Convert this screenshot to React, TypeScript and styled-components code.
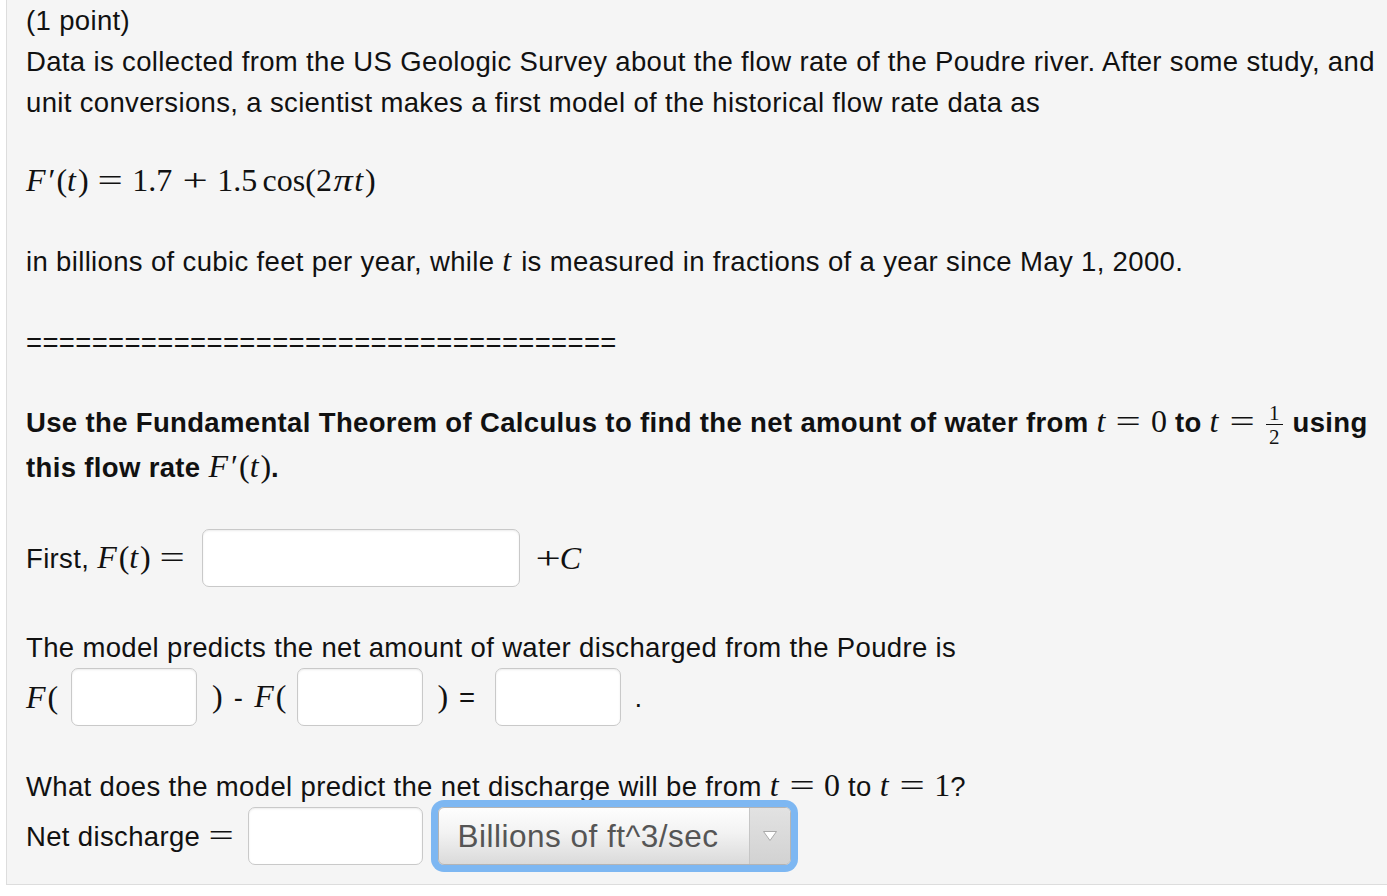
import * as React from "react";
import styled, { createGlobalStyle } from "styled-components";

const GlobalStyle = createGlobalStyle`
  html, body {
    margin: 0;
    padding: 0;
    background: #ffffff;
  }
  body {
    font-family: "Liberation Sans", Arial, sans-serif;
  }
`;

const App: React.FC = () => {
  return (
    <>
      <GlobalStyle />
      <Panel>
        <Para $top={0}>
          (1 point)
          <br />
          Data is collected from the US Geologic Survey about the flow rate of
          the Poudre river. After some study, and
          <br />
          unit conversions, a scientist makes a first model of the historical
          flow rate data as
        </Para>

        <Para $top={38}>
          <M>
            <V>F</V>
            <Prime>′</Prime>(<V>t</V>)<Eq>=</Eq>1.7<Op>+</Op>1.5
            <Fn>cos</Fn>(2<Pi>π</Pi>
            <V>t</V>)
          </M>
        </Para>

        <Para $top={39}>
          in billions of cubic feet per year, while <M><V>t</V></M> is measured
          in fractions of a year since May 1, 2000.
        </Para>

        <Para $top={40}>====================================</Para>

        <BoldPara $top={38}>
          Use the Fundamental Theorem of Calculus to find the net amount of
          water from{" "}
          <M>
            <V>t</V>
            <Eq>=</Eq>0
          </M>{" "}
          to{" "}
          <M>
            <V>t</V>
            <Eq>=</Eq>
            <Frac>
              <span>1</span>
              <span>2</span>
            </Frac>
          </M>{" "}
          using
          <br />
          this flow rate{" "}
          <M>
            <V>F</V>
            <Prime>′</Prime>(<V>t</V>)
          </M>
          .
        </BoldPara>

        <Row $top={39}>
          <Label>
            First, <M><V>F</V>(<V>t</V>)<Eq>=</Eq></M>
          </Label>
          <Blank $w={318} $ml={8} />
          <M $ml={15}>
            <Op $tight>+</Op>
            <V>C</V>
          </M>
        </Row>

        <Para $top={40}>
          The model predicts the net amount of water discharged from the Poudre
          is
        </Para>
        <Row $top={0}>
          <M>
            <V>F</V>(
          </M>
          <Blank $w={126} $ml={13} />
          <Sym $ml={15}>
            <M>)</M>
            <Dash>-</Dash>
            <M>
              <V>F</V>(
            </M>
          </Sym>
          <Blank $w={126} $ml={11} />
          <Sym $ml={14}>
            <M>)</M>
            <Dash>=</Dash>
          </Sym>
          <Blank $w={126} $ml={9} />
          <Sym $ml={13}>.</Sym>
        </Row>

        <Para $top={40}>
          What does the model predict the net discharge will be from{" "}
          <M>
            <V>t</V>
            <Eq>=</Eq>0
          </M>{" "}
          to{" "}
          <M>
            <V>t</V>
            <Eq>=</Eq>1
          </M>
          ?
        </Para>
        <Row $top={0}>
          <Label>
            Net discharge
            <M>
              <Eq $flush>=</Eq>
            </M>
          </Label>
          <Blank $w={175} $ml={18} />
          <Select>
            <SelectText>Billions of ft^3/sec</SelectText>
            <SelectArrow>
              <svg width="16" height="12" viewBox="0 0 16 12">
                <path
                  d="M1.5 1.5 L14.5 1.5 L8 10.5 Z"
                  fill="#ffffff"
                  stroke="#a9a9a9"
                  strokeWidth="1"
                  strokeLinejoin="round"
                />
              </svg>
            </SelectArrow>
          </Select>
        </Row>
      </Panel>
    </>
  );
};

export default App;

const Panel = styled.div`
  box-sizing: border-box;
  margin-left: 6px;
  height: 885px;
  padding: 0 4px 0 19px;
  background: #f5f5f5;
  border-left: 1px solid #dddddd;
  border-bottom: 1px solid #dddddd;
  color: #111111;
  font-size: 27.5px;
  letter-spacing: 0.35px;
  overflow: hidden;
`;

const Para = styled.div<{ $top: number }>`
  margin-top: ${(p) => p.$top}px;
  line-height: 41px;
  white-space: nowrap;
`;

const BoldPara = styled.div<{ $top: number }>`
  margin-top: ${(p) => p.$top}px;
  line-height: 44px;
  font-weight: bold;
  white-space: nowrap;
`;

const Row = styled.div<{ $top: number }>`
  display: flex;
  align-items: center;
  height: 58px;
  margin-top: ${(p) => p.$top}px;
  white-space: nowrap;
`;

const Label = styled.span`
  line-height: 41px;
`;

const Sym = styled.span<{ $ml: number }>`
  margin-left: ${(p) => p.$ml}px;
  line-height: 41px;
`;

const Dash = styled.span`
  margin: 0 11px;
`;

const M = styled.span<{ $ml?: number }>`
  font-family: "Liberation Serif", "Times New Roman", serif;
  font-size: 32px;
  font-weight: normal;
  letter-spacing: 0;
  line-height: 1;
  margin-left: ${(p) => p.$ml ?? 0}px;
`;

const V = styled.i`
  font-style: italic;
  padding-right: 0.06em;
`;

const Pi = styled.i`
  font-style: italic;
  display: inline-block;
  transform: scaleX(1.2);
  margin: 0 0.1em;
`;

const Prime = styled.span`
  margin: 0 1px 0 1px;
`;

const Fn = styled.span`
  margin-left: 0.17em;
`;

const Eq = styled.span<{ $flush?: boolean }>`
  display: inline-block;
  transform: scaleX(1.4);
  margin: 0 ${(p) => (p.$flush ? "0" : "0.42em")} 0 0.38em;
`;

const Op = styled.span<{ $tight?: boolean }>`
  display: inline-block;
  transform: scaleX(1.4);
  margin: 0 ${(p) => (p.$tight ? "0.1em" : "0.42em")};
`;

const Frac = styled.span`
  display: inline-flex;
  flex-direction: column;
  align-items: center;
  vertical-align: 12px;
  font-size: 21px;
  line-height: 18px;
  padding: 0 2px;
  span:first-child {
    border-bottom: 1px solid #111;
    padding: 0 3px 2px;
  }
  span:last-child {
    padding-top: 3px;
  }
`;

const Blank = styled.input<{ $w: number; $ml: number }>`
  box-sizing: border-box;
  width: ${(p) => p.$w}px;
  height: 58px;
  margin: 0 0 0 ${(p) => p.$ml}px;
  padding: 0 10px;
  border: 1px solid #c9c9c9;
  border-radius: 7px;
  background: #ffffff;
  box-shadow: inset 0 1px 2px rgba(0, 0, 0, 0.08);
  font-size: 26px;
  font-family: "Liberation Sans", Arial, sans-serif;
  outline: none;
`;

const Select = styled.div`
  box-sizing: border-box;
  display: flex;
  width: 353px;
  height: 58px;
  margin-left: 15px;
  border: 1px solid #b4b4b4;
  border-radius: 6px;
  background: linear-gradient(#fefefe, #f2f2f2 45%, #dadada);
  box-shadow: 0 0 0 7px #7db7f2;
  overflow: hidden;
`;

const SelectText = styled.span`
  flex: 1;
  padding-left: 18px;
  line-height: 56px;
  font-size: 31.5px;
  letter-spacing: 0.5px;
  color: #555555;
`;

const SelectArrow = styled.span`
  width: 40px;
  display: flex;
  align-items: center;
  justify-content: center;
  border-left: 1px solid #c6c6c6;
  background: linear-gradient(#e2e2e2, #d2d2d2);
`;
